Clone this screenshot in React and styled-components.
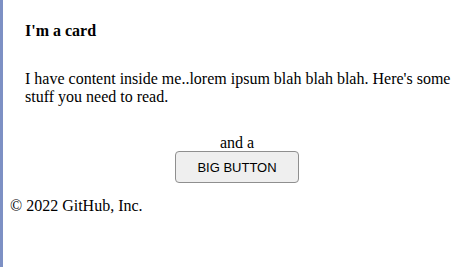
import React from "react";
import styled, { createGlobalStyle } from "styled-components";

const Global = createGlobalStyle`
  html, body { margin: 0; padding: 0; background: #ffffff; }
  body { font-family: "Liberation Serif", "Times New Roman", serif; font-size: 16px; color: #000; }
`;

const Page = styled.div`
  box-sizing: border-box;
  min-height: 267px;
  border-left: 3px solid #7d90c4;
  padding: 22px 0 0 7px;
  display: flex;
  flex-direction: column;
`;

const Card = styled.section`
  padding: 0 15px;
  margin-right: 10px;
`;

const Title = styled.h3`
  margin: 0;
  font-size: 16px;
  font-weight: bold;
  line-height: 18px;
`;

const Body = styled.p`
  margin: 30px -20px 0 0;
  line-height: 18px;
`;

const Action = styled.div`
  margin-top: 28px;
  display: flex;
  flex-direction: column;
  align-items: center;
  line-height: 18px;
`;

const BigButton = styled.button`
  box-sizing: border-box;
  width: 124px;
  height: 32px;
  margin-top: -1px;
  background: #efefef;
  border: 1px solid #8f8f8f;
  border-radius: 4px;
  font-family: "Liberation Sans", Arial, sans-serif;
  font-size: 13px;
  color: #000;
  padding: 0;
`;

const Footer = styled.footer`
  margin-top: 14px;
  line-height: 18px;
`;

export default function App() {
  return (
    <>
      <Global />
      <Page>
        <Card>
          <Title>I'm a card</Title>
          <Body>
            I have content inside me..lorem ipsum blah blah blah. Here's some
            stuff you need to read.
          </Body>
          <Action>
            and a
            <BigButton>BIG BUTTON</BigButton>
          </Action>
        </Card>
        <Footer>© 2022 GitHub, Inc.</Footer>
      </Page>
    </>
  );
}
